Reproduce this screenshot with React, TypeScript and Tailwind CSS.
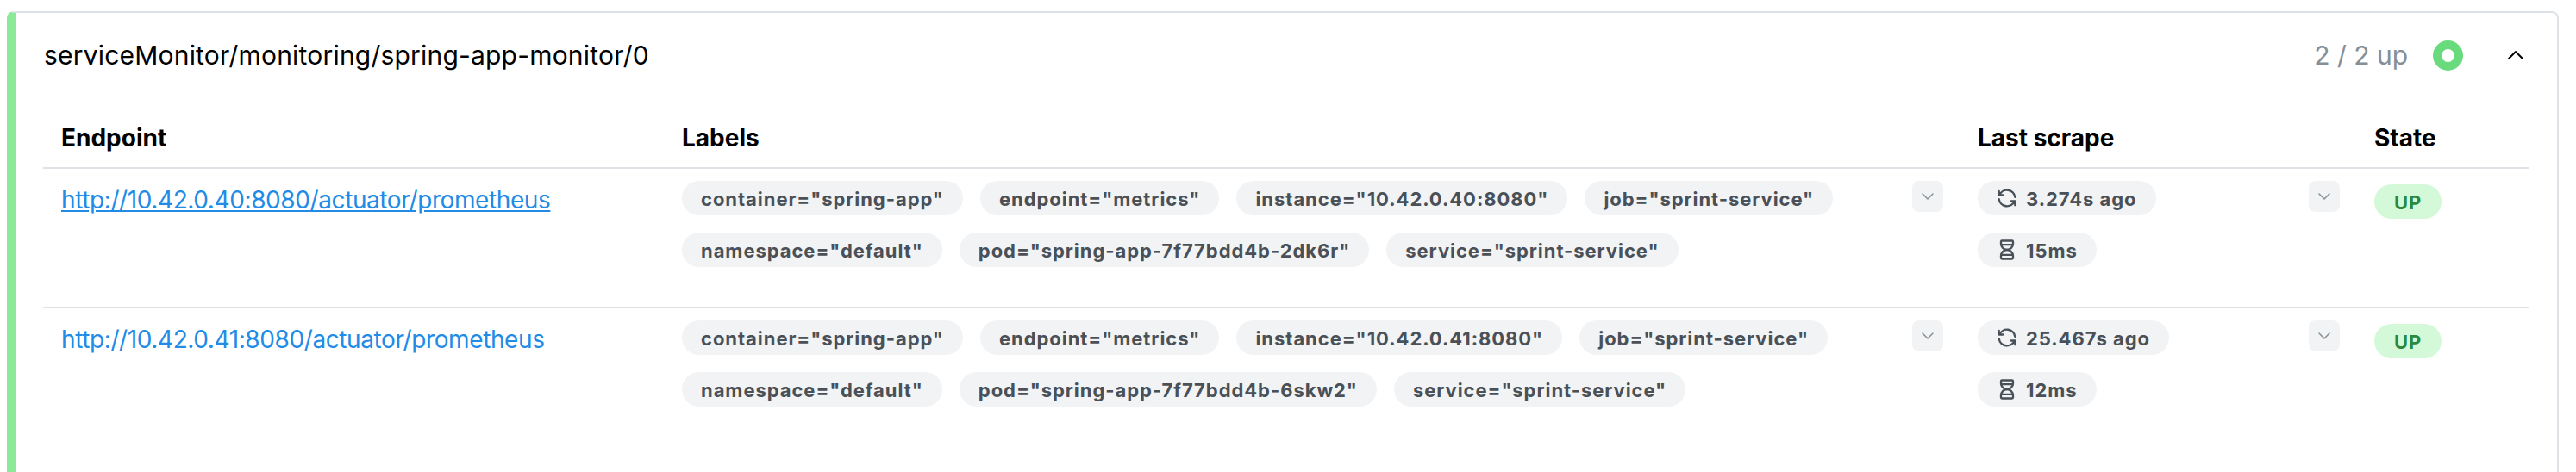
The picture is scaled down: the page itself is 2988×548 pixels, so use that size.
type Target = {
  href: string;
  underlined: boolean;
  labels: string[];
  scrape: string;
  duration: string;
};

const targets: Target[] = [
  {
    href: "http://10.42.0.40:8080/actuator/prometheus",
    underlined: true,
    labels: [
      'container="spring-app"',
      'endpoint="metrics"',
      'instance="10.42.0.40:8080"',
      'job="sprint-service"',
      'namespace="default"',
      'pod="spring-app-7f77bdd4b-2dk6r"',
      'service="sprint-service"',
    ],
    scrape: "3.274s ago",
    duration: "15ms",
  },
  {
    href: "http://10.42.0.41:8080/actuator/prometheus",
    underlined: false,
    labels: [
      'container="spring-app"',
      'endpoint="metrics"',
      'instance="10.42.0.41:8080"',
      'job="sprint-service"',
      'namespace="default"',
      'pod="spring-app-7f77bdd4b-6skw2"',
      'service="sprint-service"',
    ],
    scrape: "25.467s ago",
    duration: "12ms",
  },
];

function Pill({ children }: { children: React.ReactNode }) {
  return (
    <span className="inline-flex h-[40px] items-center rounded-full bg-[#f1f3f5] px-[22px] pt-[2px] text-[22px] font-bold tracking-[0.95px] whitespace-nowrap text-[#495057]">
      {children}
    </span>
  );
}

function IconPill({ icon, children }: { icon: React.ReactNode; children: React.ReactNode }) {
  return (
    <span className="inline-flex h-[40px] items-center gap-[8px] rounded-full bg-[#f1f3f5] pr-[22px] pl-[20px] text-[22px] font-bold tracking-[0.95px] whitespace-nowrap text-[#495057]">
      {icon}
      <span className="pt-[2px]">{children}</span>
    </span>
  );
}

function ExpandButton() {
  return (
    <button className="flex h-[36px] w-[36px] shrink-0 items-center justify-center rounded-[8px] bg-[#f1f3f5] text-[#868e96]">
      <svg width="24" height="24" viewBox="0 0 24 24" fill="none" stroke="currentColor" strokeWidth="1.5" strokeLinecap="round" strokeLinejoin="round">
        <path d="M6 9l6 6l6 -6" />
      </svg>
    </button>
  );
}

function RefreshIcon() {
  return (
    <svg width="28" height="28" viewBox="0 0 24 24" fill="none" stroke="currentColor" strokeWidth="2" strokeLinecap="round" strokeLinejoin="round">
      <path d="M20 11a8.1 8.1 0 0 0 -15.5 -2m-.5 -4v4h4" />
      <path d="M4 13a8.1 8.1 0 0 0 15.5 2m.5 4v-4h-4" />
    </svg>
  );
}

function HourglassIcon() {
  return (
    <svg width="28" height="28" viewBox="0 0 24 24" fill="none" stroke="currentColor" strokeWidth="2" strokeLinecap="round" strokeLinejoin="round">
      <path d="M6.5 7h11" />
      <path d="M6.5 17h11" />
      <path d="M6 20v-2a6 6 0 1 1 12 0v2a1 1 0 0 1 -1 1h-10a1 1 0 0 1 -1 -1z" />
      <path d="M6 4v2a6 6 0 1 0 12 0v-2a1 1 0 0 0 -1 -1h-10a1 1 0 0 0 -1 1z" />
    </svg>
  );
}

export default function App() {
  return (
    <div className="h-[548px] overflow-hidden bg-white pt-[13px] pl-[8px] [font-family:Inter,sans-serif] text-black">
      <div className="h-[600px] w-[2960px] rounded-[8px] border-2 border-l-[10px] border-[#dee2e6] border-l-[#8ce99a]">
        <div className="flex h-[98px] items-center justify-between pr-[32px] pl-[33px]">
          <div className="text-[30px] leading-[48px] tracking-[0.2px]">serviceMonitor/monitoring/spring-app-monitor/0</div>
          <div className="flex items-center">
            <span className="text-[30px] text-[#868e96]">2 / 2 up</span>
            <span className="mr-[45px] ml-[29px] h-[35px] w-[35px] rounded-full border-[10px] border-[#69db7c]" />
            <svg width="32" height="32" viewBox="0 0 24 24" fill="none" stroke="currentColor" strokeWidth="1.5" strokeLinecap="round" strokeLinejoin="round">
              <path d="M6 15l6 -6l6 6" />
            </svg>
          </div>
        </div>
        <div className="mt-[12px] pl-[32px]">
          <table className="w-[2883px] table-fixed text-left">
            <colgroup>
              <col className="w-[721px]" />
              <col className="w-[1503px]" />
              <col className="w-[460px]" />
              <col />
            </colgroup>
            <thead>
              <tr className="h-[70px] border-b-2 border-[#dee2e6] text-[28px] font-bold">
                <th className="px-[21px]">Endpoint</th>
                <th className="px-[20px]">Labels</th>
                <th className="px-[20px]">Last scrape</th>
                <th className="px-[20px]">State</th>
              </tr>
            </thead>
            <tbody>
              {targets.map((t, i) => (
                <tr key={t.href} className={i === 0 ? "h-[162px] border-b-2 border-[#dee2e6]" : "h-[160px]"}>
                  <td className="px-[21px] pt-[16px] align-top">
                    <a href={t.href} className={`text-[28px] leading-[40px] tracking-[-0.4px] text-[#228be6] ${t.underlined ? "underline" : ""}`}>
                      {t.href}
                    </a>
                  </td>
                  <td className="px-[20px] pt-[14px] align-top">
                    <div className="flex items-start justify-between">
                      <div className="flex w-[1380px] flex-wrap gap-[20px]">
                        {t.labels.map((l) => (
                          <Pill key={l}>{l}</Pill>
                        ))}
                      </div>
                      <ExpandButton />
                    </div>
                  </td>
                  <td className="px-[20px] pt-[14px] align-top">
                    <div className="flex items-start justify-between">
                      <div className="flex flex-col items-start gap-[20px]">
                        <IconPill icon={<RefreshIcon />}>{t.scrape}</IconPill>
                        <IconPill icon={<HourglassIcon />}>{t.duration}</IconPill>
                      </div>
                      <ExpandButton />
                    </div>
                  </td>
                  <td className="px-[20px] pt-[18px] align-top">
                    <span className="inline-flex h-[40px] items-center rounded-full bg-[#d3f9d8] px-[23px] pt-[2px] text-[22px] font-bold tracking-[0.95px] text-[#2b8a3e]">
                      UP
                    </span>
                  </td>
                </tr>
              ))}
            </tbody>
          </table>
        </div>
      </div>
    </div>
  );
}
